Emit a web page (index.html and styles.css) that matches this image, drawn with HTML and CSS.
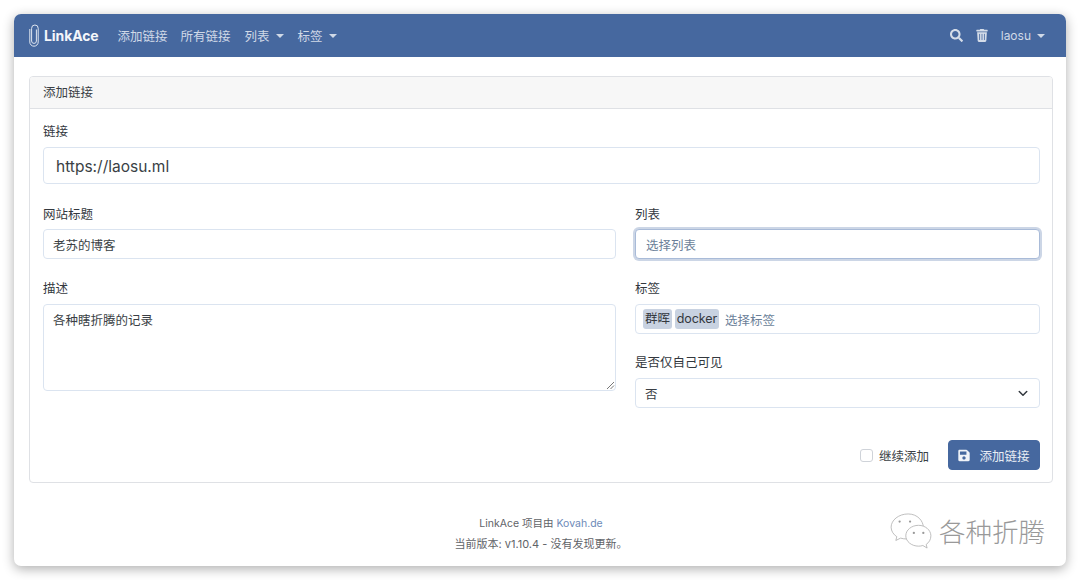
FILE: index.html
```html
<!DOCTYPE html>
<html lang="zh">
<head>
<meta charset="utf-8">
<title>LinkAce</title>
<link rel="stylesheet" href="styles.css">
</head>
<body>
<div class="window">
  <nav class="navbar">
    <a class="brand">
      <svg class="clip" viewBox="0 0 10 23" width="10" height="23"><path d="M.8 5v13a4.200 4.200 0 0 0 8.400 0V4.300a3.300 3.300 0 0 0-6.600 0V17a2.400 2.400 0 0 0 4.800 0V5.500" fill="none" stroke="#dfe6f0" stroke-width="1"/></svg>
      <span>LinkAce</span>
    </a>
    <a class="nav-link">添加链接</a>
    <a class="nav-link">所有链接</a>
    <a class="nav-link">列表<i class="caret"></i></a>
    <a class="nav-link">标签<i class="caret"></i></a>
    <div class="nav-right">
      <svg class="nav-icon" viewBox="0 0 512 512" width="13" height="13"><path fill="#d5dde9" d="M505 442.700 405.300 343c-4.500-4.500-10.600-7-17-7H372c27.600-35.300 44-79.700 44-128C416 93.100 322.900 0 208 0S0 93.100 0 208s93.100 208 208 208c48.300 0 92.700-16.400 128-44v16.300c0 6.400 2.500 12.500 7 17l99.700 99.700c9.400 9.400 24.600 9.400 33.900 0l28.300-28.300c9.400-9.400 9.400-24.600.1-34zM208 336c-70.700 0-128-57.200-128-128 0-70.700 57.200-128 128-128 70.700 0 128 57.200 128 128 0 70.700-57.200 128-128 128z"/></svg>
      <svg class="nav-icon trash" viewBox="0 0 448 512" width="12" height="13"><path fill="#d5dde9" d="M432 32H312l-9.400-18.700A24 24 0 0 0 281.100 0H166.800a23.700 23.700 0 0 0-21.400 13.300L136 32H16A16 16 0 0 0 0 48v32a16 16 0 0 0 16 16h416a16 16 0 0 0 16-16V48a16 16 0 0 0-16-16zM53.200 467a48 48 0 0 0 47.900 45h245.800a48 48 0 0 0 47.900-45L416 128H32z"/><path stroke="#46689f" stroke-width="32" stroke-linecap="round" d="M128 208v208M224 208v208M320 208v208"/></svg>
      <a class="nav-link user">laosu<i class="caret"></i></a>
    </div>
  </nav>

  <main class="content">
    <section class="card">
      <header class="card-header">添加链接</header>
      <form class="card-body">
        <label class="label first">链接</label>
        <div class="control large">https://laosu.ml</div>
        <div class="columns">
          <div class="col">
            <label class="label">网站标题</label>
            <div class="control">老苏的博客</div>
            <label class="label gap">描述</label>
            <div class="control textarea">各种瞎折腾的记录
              <svg class="grip" viewBox="0 0 9 9" width="9" height="9"><path d="M1 8 8 1M4.500 8 8 4.500" stroke="#777" stroke-width="1" fill="none"/></svg>
            </div>
          </div>
          <div class="col">
            <label class="label">列表</label>
            <div class="control focus"><span class="placeholder">选择列表</span></div>
            <label class="label gap">标签</label>
            <div class="control tags"><span class="tag">群晖</span><span class="tag">docker</span><span class="placeholder after">选择标签</span></div>
            <label class="label gap second">是否仅自己可见</label>
            <div class="control select">否
              <svg viewBox="0 0 16 16" width="12" height="12"><path d="m3 6 5 5 5-5" fill="none" stroke="#343a40" stroke-width="2" stroke-linecap="round" stroke-linejoin="round"/></svg>
            </div>
          </div>
        </div>
        <div class="actions">
          <span class="check"></span>
          <span class="check-label">继续添加</span>
          <button type="button" class="btn">
            <svg viewBox="0 0 448 512" width="12" height="13"><path fill="#f0f3f8" d="m433.900 129.900-83.900-83.900A48 48 0 0 0 316.100 32H48C21.500 32 0 53.500 0 80v352c0 26.500 21.500 48 48 48h352c26.500 0 48-21.500 48-48V163.900a48 48 0 0 0-14.100-34zM224 416c-35.300 0-64-28.700-64-64s28.700-64 64-64 64 28.700 64 64-28.700 64-64 64zm96-304.500V212a12 12 0 0 1-12 12H76a12 12 0 0 1-12-12V108a12 12 0 0 1 12-12h228.500c3.200 0 6.200 1.300 8.500 3.500l3.500 3.500c2.200 2.200 3.500 5.300 3.500 8.500z"/></svg>
            <span>添加链接</span>
          </button>
        </div>
      </form>
    </section>
    <footer class="footer">
      <p class="credit">LinkAce 项目由 <a class="link">Kovah.de</a></p>
      <p>当前版本: v1.10.4 - 没有发现更新。</p>
    </footer>
    <div class="watermark">
      <svg viewBox="0 0 46 38" width="44" height="36"><g fill="#fff" stroke="#aaa" stroke-width=".8"><path d="M20 1C10 1 2 7.500 2 15c0 4 2.500 7.800 6 10l-1 4 5-2.500c2 .6 4 .9 6 .9 10 0 18-6 18-12.400S30 1 20 1z"/><path d="M31 13c-7.500 0-13.500 5-13.500 11S23.500 35 31 35c1.600 0 3-.2 4.500-.7L40 37l-1-3.800c3-2 5-5.200 5-9.200 0-6-6-11-13-11z"/></g><g fill="#999"><circle cx="11" cy="9" r="1.200"/><circle cx="22" cy="9" r="1.200"/><circle cx="26" cy="21" r="1.200"/><circle cx="36" cy="21" r="1.200"/></g></svg>
      <span>各种折腾</span>
    </div>
  </main>
</div>
</body>
</html>
```
FILE: styles.css
```css
* { box-sizing: border-box; }
html, body { margin: 0; height: 100%; }
body {
  background: #fff;
  font-family: "Inter", "Noto Sans CJK SC", sans-serif;
  font-size: 12.500px;
  color: #3a3f45;
  padding: 14px;
  overflow: hidden;
}
.window {
  width: 1052px;
  height: 552px;
  background: #fff;
  border-radius: 7px;
  box-shadow: 0 3px 12px rgba(0, 0, 0, .32);
  display: flex;
  flex-direction: column;
  overflow: hidden;
}
.navbar {
  height: 43px;
  flex: none;
  background: #46689f;
  display: flex;
  align-items: center;
  padding: 0 21px 0 15px;
  color: #d0d9e7;
}
.brand {
  display: flex;
  align-items: center;
  gap: 5px;
  color: #f4f6fa;
  font-weight: 700;
  font-size: 14px;
  margin-right: 19px;
  letter-spacing: -.1px;
}
.clip { display: block; }
.nav-link {
  display: flex;
  align-items: center;
  margin-right: 14px;
  font-size: 12.500px;
}
.nav-link:nth-of-type(2) { margin-right: 13px; }
.caret {
  width: 0;
  height: 0;
  margin-left: 6px;
  border-left: 4px solid transparent;
  border-right: 4px solid transparent;
  border-top: 4px solid currentColor;
}
.nav-right {
  margin-left: auto;
  display: flex;
  align-items: center;
}
.nav-icon { display: block; margin-right: 13px; }
.trash { margin-right: 13px; }
.nav-link.user { margin-right: 0; font-size: 12px; }

.content {
  flex: 1;
  padding: 19px 13px 0 15px;
  position: relative;
}
.card {
  height: 407px;
  border: 1px solid #dfe1e5;
  border-radius: 4px;
  overflow: hidden;
}
.card-header {
  height: 32px;
  background: #f7f7f7;
  border-bottom: 1px solid #dfe1e5;
  padding: 0 13px 2px;
  display: flex;
  align-items: center;
}
.card-body { padding: 0 12px 0 13px; display: block; }
.label {
  display: block;
  height: 18px;
  line-height: 18px;
  margin-top: 22px;
  margin-bottom: 5px;
  color: #33383e;
}
.label.first { margin-top: 14px; margin-bottom: 6px; }
.label.gap { margin-top: 21px; margin-bottom: 6px; }
.label.gap.second { margin-top: 20px; }
.control {
  height: 30px;
  border: 1px solid #dbe4f0;
  border-radius: 4px;
  padding: 0 10px;
  display: flex;
  align-items: center;
  background: #fff;
  color: #3a3f45;
}
.control.large {
  height: 37px;
  font-size: 15.500px;
  padding: 1px 12px 0;
}
.columns {
  display: grid;
  grid-template-columns: 573px 405px;
  column-gap: 19px;
}
.col { min-width: 0; }
.col:first-child .control { padding-left: 9px; }
.control.textarea {
  height: 87px;
  align-items: flex-start;
  padding-top: 5px;
  position: relative;
}
.grip { position: absolute; right: 0; bottom: 0; }
.focus {
  border-color: #a9bbd8;
  box-shadow: 0 0 0 2px #ccd6e6;
}
.placeholder { color: #6b7f99; }
.placeholder.after { margin-left: 3px; }
.control.tags { padding: 0 7px; gap: 3px; }
.tag {
  background: #c8d2e1;
  border-radius: 3px;
  padding: 0 2px;
  height: 20px;
  line-height: 20px;
  color: #33383e;
  letter-spacing: -.1px;
}
.control.select { justify-content: space-between; padding: 0 10px 0 9px; }
.actions {
  display: flex;
  align-items: center;
  justify-content: flex-end;
  margin-top: 32px;
}
.check {
  width: 13px;
  height: 13px;
  border: 1px solid #cfd3d9;
  border-radius: 3px;
  margin-right: 6px;
}
.check-label { margin-right: 19px; }
.btn {
  width: 92px;
  height: 30px;
  border: 1px solid #46689f;
  border-radius: 4px;
  background: #46689f;
  color: #e8edf4;
  font: inherit;
  padding: 0;
  display: flex;
  align-items: center;
  justify-content: center;
  gap: 9px;
}
.footer {
  margin-top: 31px;
  text-align: center;
  font-size: 11px;
  color: #5f6368;
  line-height: 20px;
}
.footer p { margin: 0; }
.footer .credit { font-size: 10.500px; }
.link { color: #6d8ab8; }
.watermark {
  position: absolute;
  right: 21px;
  bottom: 16px;
  display: flex;
  align-items: center;
  gap: 6px;
  color: #999;
  font-size: 26.500px;
  font-weight: 300;
}
```
